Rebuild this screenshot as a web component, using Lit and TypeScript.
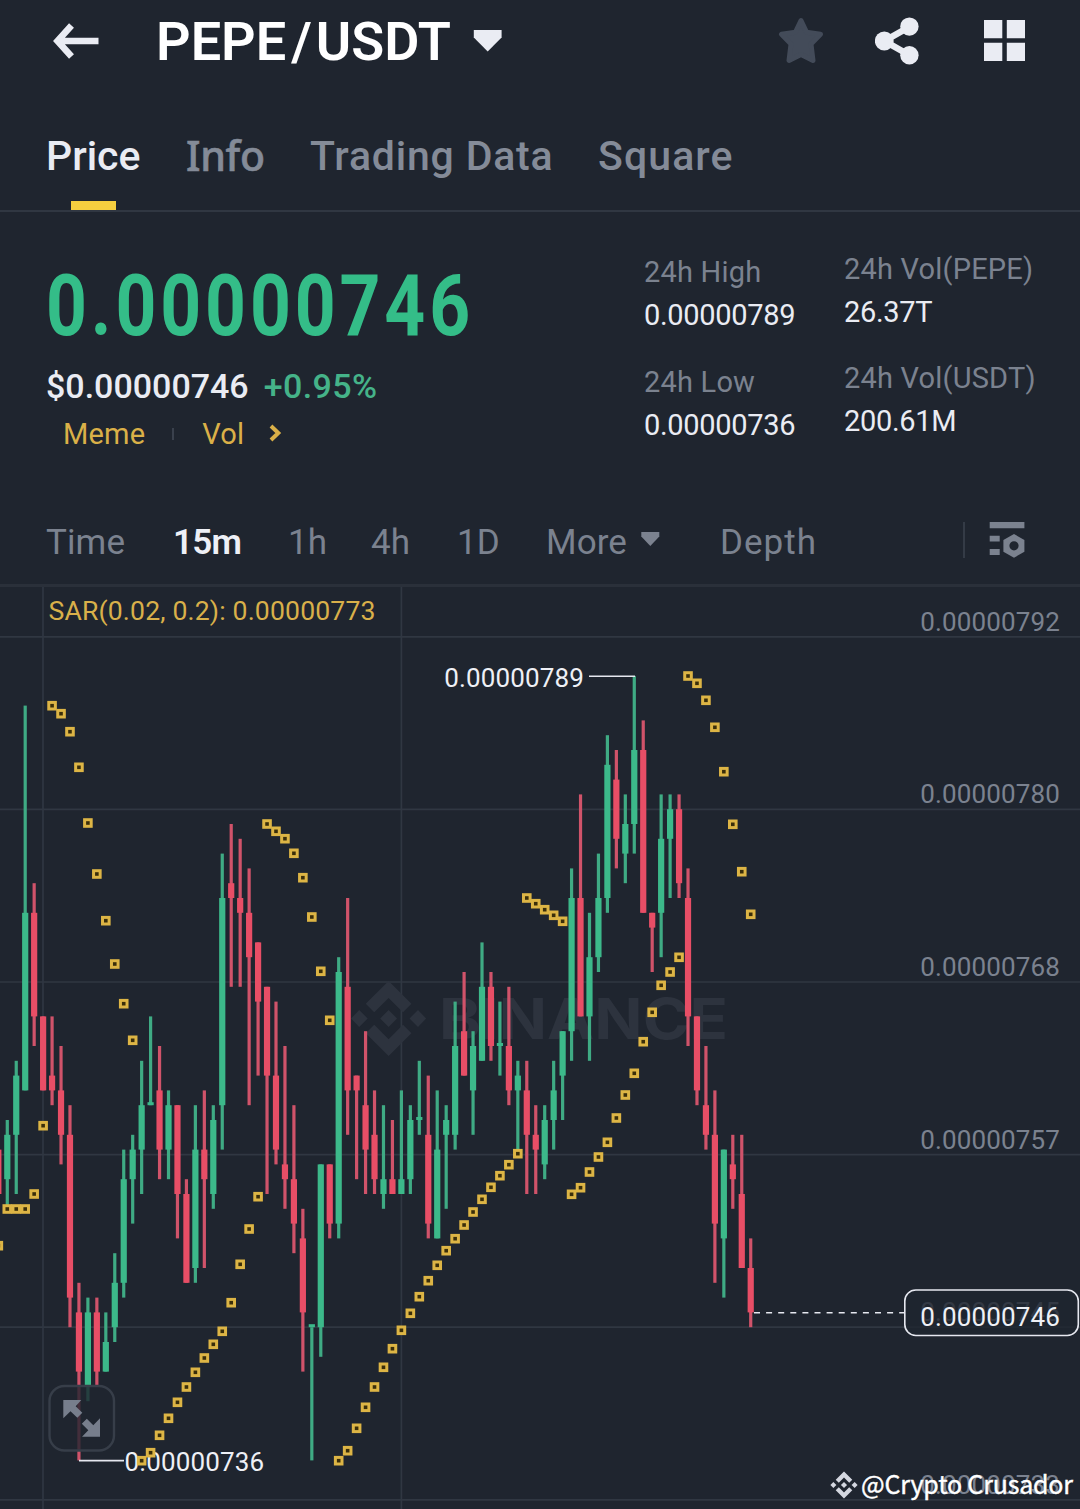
import { LitElement, html, svg, css } from "lit";
import { customElement } from "lit/decorators.js";

type Candle = [side: "u" | "d", high: number, top: number, bottom: number, low: number];

/** Candles left to right; prices are the last three digits of 0.00000xxx. */
const CANDLES: Candle[] = [
  ["d", 757, 757, 754, 754], ["u", 759, 758, 755, 753], ["u", 763, 762, 758, 754],
  ["u", 787, 773, 761, 761], ["d", 775, 773, 766, 764], ["d", 766, 766, 761, 761],
  ["d", 766, 762, 761, 760], ["d", 764, 761, 758, 756], ["d", 760, 758, 747, 745],
  ["d", 748, 746, 742, 736], ["u", 747, 746, 741, 740], ["d", 747, 746, 742, 741],
  ["u", 746, 744, 742, 742], ["u", 750, 748, 745, 744], ["u", 757, 755, 748, 747],
  ["u", 758, 757, 755, 752], ["u", 763, 760, 757, 754], ["u", 766, 760, 760, 760],
  ["d", 764, 761, 757, 755], ["u", 761, 760, 757, 755], ["d", 760, 760, 754, 751],
  ["d", 755, 754, 748, 748], ["u", 760, 757, 749, 748], ["d", 761, 757, 755, 749],
  ["u", 760, 759, 754, 753], ["u", 777, 774, 760, 757], ["d", 779, 775, 774, 768],
  ["d", 778, 774, 773, 768], ["d", 776, 773, 770, 760], ["d", 771, 771, 767, 762],
  ["d", 768, 768, 762, 754], ["d", 767, 762, 757, 756], ["d", 764, 756, 755, 753],
  ["d", 760, 755, 752, 750], ["d", 753, 751, 746, 742], ["u", 745, 745, 745, 736],
  ["u", 756, 756, 745, 743], ["d", 756, 756, 752, 751], ["u", 770, 769, 752, 751],
  ["d", 774, 768, 761, 758], ["d", 762, 762, 761, 755], ["d", 765, 760, 757, 754],
  ["d", 761, 758, 755, 754], ["u", 760, 755, 754, 753], ["d", 759, 755, 754, 754],
  ["u", 761, 755, 754, 754], ["u", 760, 759, 755, 754], ["u", 763, 759, 759, 758],
  ["d", 762, 758, 752, 751], ["u", 761, 757, 751, 751], ["u", 760, 759, 758, 753],
  ["u", 767, 764, 758, 757], ["d", 769, 765, 762, 762], ["u", 765, 764, 761, 758],
  ["u", 771, 768, 763, 763], ["d", 769, 768, 764, 763], ["u", 767, 764, 764, 762],
  ["d", 768, 764, 761, 760], ["u", 763, 762, 761, 757], ["d", 763, 761, 758, 754],
  ["d", 760, 758, 757, 754], ["u", 760, 759, 756, 755], ["u", 763, 761, 759, 757],
  ["u", 765, 765, 762, 759], ["u", 776, 774, 765, 763], ["d", 781, 774, 766, 766],
  ["u", 773, 770, 766, 763], ["u", 777, 774, 770, 769], ["u", 785, 783, 774, 773],
  ["d", 784, 782, 778, 776], ["u", 781, 779, 777, 775], ["u", 789, 784, 779, 777],
  ["d", 786, 784, 773, 773], ["d", 773, 773, 772, 769], ["u", 781, 778, 773, 770],
  ["u", 781, 780, 778, 774], ["d", 781, 780, 775, 774], ["d", 776, 774, 766, 764],
  ["d", 766, 766, 761, 760], ["d", 764, 760, 758, 757], ["d", 761, 758, 752, 748],
  ["u", 757, 757, 751, 747], ["d", 758, 756, 755, 753], ["d", 758, 754, 749, 749],
  ["d", 751, 749, 746, 745],
];

/** Parabolic SAR marker heights on the canvas, one per candle. */
const SAR: number[] = [
  1245.7, 1209, 1209, 1209, 1194, 1125.7, 705.7, 713.7, 731.7, 767.3, 823, 874, 920.7, 964,
  1003.7, 1040.3, 1460.7, 1452.7, 1435.3, 1418.3, 1402.3, 1387, 1372.3, 1358, 1344.3, 1331.3,
  1302.7, 1264.3, 1229, 1196.7, 824, 831.3, 838.7, 853.3, 877.7, 917, 971.3, 1020.3, 1460.7,
  1450.7, 1428.3, 1407.3, 1387, 1367.3, 1348.7, 1330.3, 1313.3, 1296.7, 1280.7, 1265.3, 1250.7,
  1238.7, 1225, 1212, 1199.3, 1187.3, 1175.7, 1164.7, 1153.7, 898, 903.7, 909.7, 915.3, 921.3,
  1194.3, 1187.7, 1172, 1157, 1142.3, 1118, 1095, 1073.3, 1041.7, 1012.3, 985.3, 972, 957.3,
  676, 683.3, 700.3, 727.3, 771.7, 824.3, 871.7, 914.3,
];

const GRID_Y = [636.8, 809.4, 982, 1154.6, 1327.2, 1499.8];
const AXIS = ["792", "780", "768", "757", "745", "733"];

const xAt = (i: number) => 25.2 + (i - 3) * 8.957;
const yAt = (price: number) => 676 + (789 - price) * 14.8;

const brandMark = (cx: number, cy: number, half: number, cls: string) => svg`
  <g class=${cls} transform="translate(${cx} ${cy}) scale(${half / 12})">
    <path d="M0 -12 L7.3 -4.7 L4.6 -2 L0 -6.6 L-4.6 -2 L-7.3 -4.7 Z" />
    <path d="M0 12 L7.3 4.7 L4.6 2 L0 6.6 L-4.6 2 L-7.3 4.7 Z" />
    <path d="M0 -2.7 L2.7 0 L0 2.7 L-2.7 0 Z" />
    <path d="M-9.4 -2.7 L-6.7 0 L-9.4 2.7 L-12 0 Z" />
    <path d="M9.4 -2.7 L12 0 L9.4 2.7 L6.7 0 Z" />
  </g>`;

@customElement("price-chart")
export class PriceChart extends LitElement {
  static styles = css`
    :host { display: block; }
    svg { display: block; font-family: Roboto, "Liberation Sans", sans-serif; font-size: 26px; }
    .grid { stroke: #303742; stroke-width: 1.7; }
    .u { fill: #3cb98a; }
    .d { fill: #e84e66; }
    .wick.u { fill: #3fab84; }
    .wick.d { fill: #d0536a; }
    .sar { fill: none; stroke: #ddb545; stroke-width: 3; }
    .hole { fill: #3a2e0a; }
    .mark { fill: #2d333e; }
    .brand { fill: #2d333e; font-family: Inter, sans-serif; font-weight: 700; font-size: 56px; }
    .axis { fill: #7b828f; }
    .white { fill: #eef0f6; }
    .line { stroke: #e6e8f0; stroke-width: 1.6; fill: none; }
    .dash { stroke-dasharray: 6 6.1; }
    .gold { fill: #d9b04a; font-size: 26.6px; }
    .tag { fill: #1f252f; fill-opacity: 0.78; stroke: #e6e8f0; stroke-width: 1.6; }
    .button { fill: #1f252f; fill-opacity: 0.8; stroke: #373e49; stroke-width: 2.4; }
    .glyph { fill: #777e8c; }
    .credit-mark { fill: #d4d7e0; }
    .credit { fill: #ffffff; font-family: "Noto Sans CJK SC", "Noto Sans", sans-serif; font-size: 25px; stroke: #ffffff; stroke-width: 0.4; }
  `;

  private candle([side, high, top, bottom, low]: Candle, i: number) {
    const x = xAt(i);
    const bodyTop = yAt(top) - (top === bottom ? 3 : 0);
    return svg`
      <rect class="wick ${side}" x=${x - 1.6} y=${yAt(high)} width="3.2" height=${yAt(low) - yAt(high)} />
      <rect class=${side} x=${x - 3.1} y=${bodyTop} width="6.2" height=${yAt(bottom) - bodyTop} />`;
  }

  render() {
    return html`
      <svg width="1080" height="922" viewBox="0 587 1080 922">
        ${GRID_Y.map((y) => svg`<line class="grid" x1="0" x2="1080" y1=${y} y2=${y} />`)}
        <line class="grid" x1="43" x2="43" y1="587" y2="1509" />
        <line class="grid" x1="401.4" x2="401.4" y1="587" y2="1509" />
        ${brandMark(388.6, 1018.5, 37.5, "mark")}
        <text class="brand" x="439" y="1039" textLength="289" lengthAdjust="spacingAndGlyphs">BINANCE</text>
        ${CANDLES.map((c, i) => this.candle(c, i))}
        ${AXIS.map((v, i) => svg`
          <text class="axis" x="920.2" y=${GRID_Y[i] - 6} textLength="139.6">0.00000${v}</text>`)}
        <text class="gold" x="48.5" y="620" textLength="327">SAR(0.02, 0.2): 0.00000773</text>
        <text class="white" x="444.2" y="687" textLength="139.6">0.00000789</text>
        <path class="line" d="M589 676.2 H635" />
        <rect class="button" x="49.5" y="1386" width="64.5" height="64.5" rx="15" />
        <path class="glyph" d="M63.3 1400 H81.3 L75.7 1406.2 L82.3 1412.8 L77.3 1417.8 L70.5 1411.3 L63.3 1418.3 Z" />
        <path class="glyph" d="M100 1436.7 H82 L88.3 1430.3 L81.8 1423.8 L86.8 1418.8 L93.3 1425.3 L100 1418.3 Z" />
        <text class="white" x="124.6" y="1471" textLength="139.6">0.00000736</text>
        <path class="line" d="M79 1460.6 H124" />
        ${SAR.map((y, i) => svg`
          <rect class="hole" x=${xAt(i) - 2.5} y=${y - 2.5} width="5" height="5" />
          <rect class="sar" x=${xAt(i) - 3.3} y=${y - 3.3} width="6.6" height="6.6" />`)}
        <path class="line dash" d="M754 1312.7 H904" />
        <rect class="tag" x="904.8" y="1290" width="173.5" height="45.5" rx="11" />
        <text class="white" x="920.2" y="1326" textLength="139.6">0.00000746</text>
        ${brandMark(844, 1485, 13.6, "credit-mark")}
        <text class="credit" x="861" y="1493.5" textLength="212">@Crypto Crusador</text>
      </svg>`;
  }
}

@customElement("app-root")
export class AppRoot extends LitElement {
  static styles = css`
    :host {
      display: block;
      width: 1080px;
      height: 1509px;
      overflow: hidden;
      background: #1f252f;
      color: #eaecf3;
      font-family: Roboto, "Liberation Sans", sans-serif;
      white-space: nowrap;
    }
    svg { display: block; flex: none; }
    .header { display: flex; align-items: center; height: 84px; padding: 0 54px 0 53px; }
    .title { width: 295px; margin: 0 22px 0 55px; color: #fff; font-size: 54px; font-weight: 600; line-height: 84px; }
    .slash { margin: 0 4px 0 5px; }
    .caret { margin-bottom: 3px; }
    .actions { display: flex; align-items: center; gap: 52px; margin: -2px 0 0 auto; }
    .actions .star { margin-right: -1px; }
    .actions .apps { margin-left: 13px; }
    .tabs {
      display: grid;
      grid-template-columns: 140px 124px 288px auto;
      height: 84px;
      padding: 42px 0 0 46px;
      border-bottom: 2px solid #303742;
      color: #848b98;
      font-size: 41px;
      font-weight: 500;
      line-height: 61px;
    }
    .tab { display: flex; flex-direction: column; align-items: flex-start; justify-content: space-between; }
    .tab.active { color: #eaecf3; }
    .tab.info { font-family: "Noto Sans", Roboto, sans-serif; letter-spacing: -0.3px; line-height: 59px; -webkit-text-stroke: 0.6px #848b98; }
    .tab.long { letter-spacing: 0.8px; }
    .tab.square { letter-spacing: 1.1px; }
    .underline { width: 45px; height: 9px; margin-left: 25px; background: #f6cf3f; }
    .summary { display: flex; height: 288px; }
    .quote { width: 598px; padding: 49px 0 0 46px; box-sizing: border-box; }
    .last { height: 90px; line-height: 90px; font-size: 85px; font-weight: 700; letter-spacing: 4.6px; color: #34bd88; transform: scaleX(0.84); transform-origin: left; }
    .fiat { display: flex; gap: 15px; margin-top: 10px; line-height: 50px; font-size: 34px; font-weight: 500; }
    .change { color: #45b389; letter-spacing: 0.4px; }
    .tags { display: flex; align-items: center; margin: 3px 0 0 17px; line-height: 40px; font-size: 29px; letter-spacing: 0.2px; color: #dab048; }
    .tags .sep { width: 2px; height: 12px; margin: 0 28px 0 27px; background: #3a414d; }
    .tags svg { margin: 0 0 2px 25px; }
    .stats { display: grid; grid-template-columns: 200px auto; padding: 39px 0 0 46px; align-items: start; font-size: 29px; letter-spacing: -0.3px; }
    .col { display: grid; row-gap: 24px; line-height: 43px; }
    .col.second { margin-top: -3px; line-height: 42.5px; }
    .label { color: #7b828f; letter-spacing: 0.2px; }
    .frames {
      display: grid;
      grid-template-columns: 127px 115px 83px 86px 89px 174px 243px auto;
      height: 84px;
      border-bottom: 3px solid #2a303a;
      padding-left: 46px;
      font-size: 35px;
      line-height: 86px;
      color: #7b828f;
    }
    .frame { display: flex; height: 86px; align-items: center; gap: 14px; letter-spacing: 0.1px; }
    .frame svg { margin-bottom: 7px; }
    .frame.active { color: #eef0f6; font-weight: 600; letter-spacing: -0.8px; }
    .frame.depth { letter-spacing: 1px; }
    .tools { display: flex; align-items: center; gap: 24px; margin-top: -6px; }
    .tools .sep { width: 2px; height: 36px; background: #343b46; }
  `;

  private stat(label: string, value: string) {
    return html`<div><div class="label">${label}</div><div>${value}</div></div>`;
  }

  render() {
    return html`
      <div class="header">
        <svg width="48" height="40" viewBox="0 0 48 40"><path d="M18.5 3.5 L4.5 19 L18.5 34.5 M4.5 19 H45.5" fill="none" stroke="#eaecf3" stroke-width="6.6" /></svg>
        <div class="title">PEPE<span class="slash">/</span>USDT</div>
        <svg class="caret" width="30" height="22" viewBox="0 0 30 22"><path d="M0.8 0 H28.6 V7.5 L14.7 21.5 L0.8 7.5 Z" fill="#eaecf3" /></svg>
        <div class="actions">
          <svg class="star" width="46" height="48" viewBox="0 0 46 48"><path d="M23 3.5 L28.6 15.3 L42.5 17.2 L33 27 L35 43.5 L23 37.5 L11 43.5 L13 27 L3.5 17.2 L17.4 15.3 Z" fill="#434b59" stroke="#434b59" stroke-width="5" stroke-linejoin="round" /></svg>
          <svg width="44" height="48" viewBox="0 0 44 48"><g fill="#eaecf3"><path d="M35 9.5 L9.5 24 L35 38.5" fill="none" stroke="#eaecf3" stroke-width="6.6" /><circle cx="9.3" cy="24" r="9.4" /><circle cx="34.4" cy="9.6" r="9.2" /><circle cx="34.4" cy="38.2" r="9.2" /></g></svg>
          <svg class="apps" width="42" height="42" viewBox="0 0 42 42"><path d="M0 0 H18.3 V18.3 H0 Z M22.8 0 H41 V18.3 H22.8 Z M0 22.8 H18.3 V41 H0 Z M22.8 22.8 H41 V41 H22.8 Z" fill="#eaecf3" /></svg>
        </div>
      </div>

      <div class="tabs">
        <div class="tab active">Price<div class="underline"></div></div>
        <div class="tab info">Info</div>
        <div class="tab long">Trading Data</div>
        <div class="tab square">Square</div>
      </div>

      <div class="summary">
        <div class="quote">
          <div class="last">0.00000746</div>
          <div class="fiat"><span>$0.00000746</span><span class="change">+0.95%</span></div>
          <div class="tags">
            <span>Meme</span><span class="sep"></span><span>Vol</span>
            <svg width="13" height="18" viewBox="0 0 13 18"><path d="M2 2 L9.3 9 L2 16" fill="none" stroke="#dab048" stroke-width="4" /></svg>
          </div>
        </div>
        <div class="stats">
          <div class="col">${this.stat("24h High", "0.00000789")}${this.stat("24h Low", "0.00000736")}</div>
          <div class="col second">${this.stat("24h Vol(PEPE)", "26.37T")}${this.stat("24h Vol(USDT)", "200.61M")}</div>
        </div>
      </div>

      <div class="frames">
        <div class="frame">Time</div>
        <div class="frame active">15m</div>
        <div class="frame">1h</div>
        <div class="frame">4h</div>
        <div class="frame">1D</div>
        <div class="frame">More
          <svg width="19" height="15" viewBox="0 0 19 15"><path d="M0.3 0 H18.3 V4.5 L9.3 14 L0.3 4.5 Z" fill="#7b828f" /></svg>
        </div>
        <div class="frame depth">Depth</div>
        <div class="tools">
          <div class="sep"></div>
          <svg width="37" height="36" viewBox="0 0 37 36"><g fill="#7b828f"><path d="M0.7 0 H35.4 V6.3 H0.7 Z M0.7 13.7 H10.7 V19.5 H0.7 Z M0.7 27 H10.7 V33 H0.7 Z" /><path fill-rule="evenodd" d="M25 12 L35.4 18 V29.7 L25 35.7 L14.4 29.7 V18 Z M25 19.2 A4.6 4.6 0 1 0 25 28.4 A4.6 4.6 0 1 0 25 19.2 Z" /></g></svg>
        </div>
      </div>
      <price-chart></price-chart>
    `;
  }
}
